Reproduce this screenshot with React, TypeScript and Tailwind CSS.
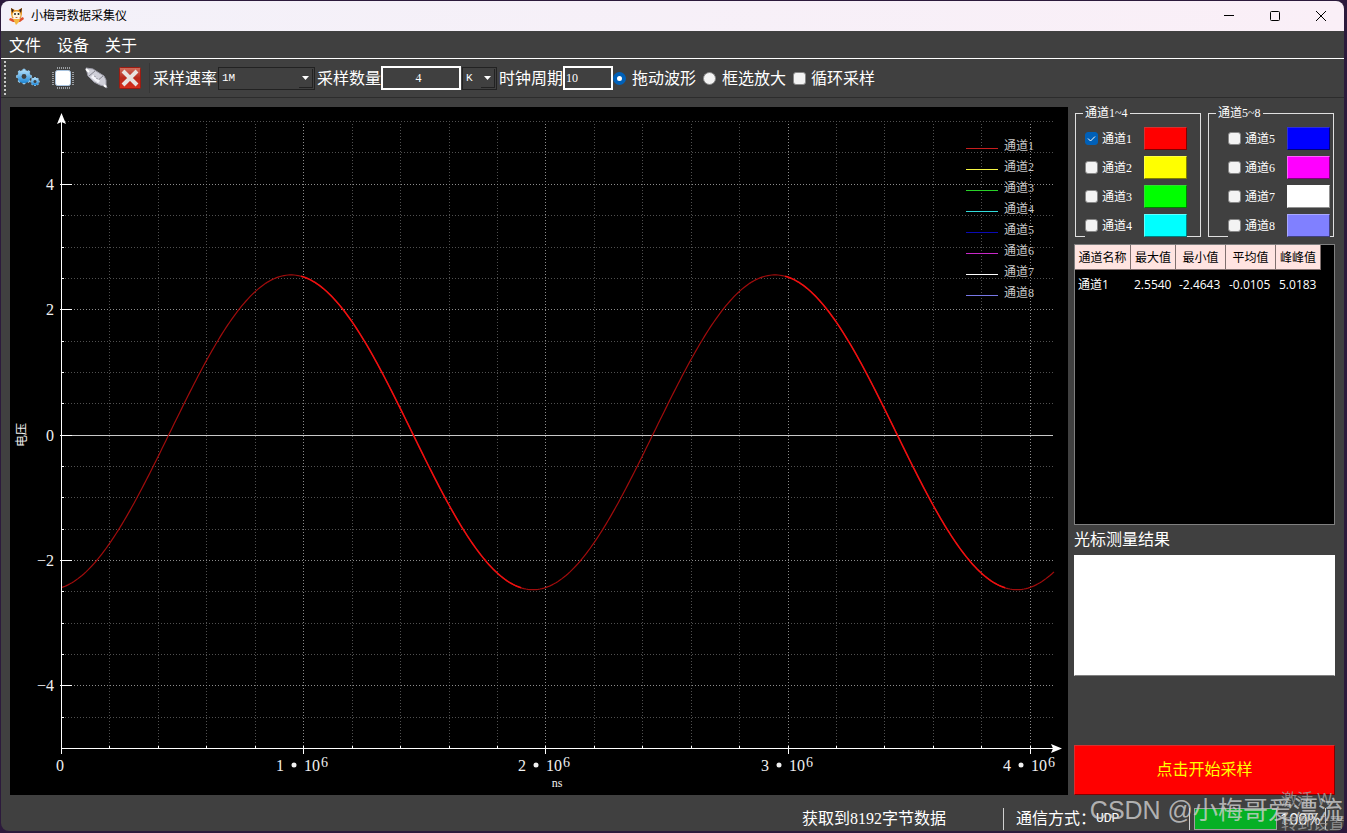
import { useState } from "react";

type Channel = { id: number; name: string; swatch: string; line: string };

const CHANNELS: Channel[] = [
  { id: 1, name: "通道1", swatch: "bg-[#ff0000] border-t-[#d83030] border-l-[#d83030] border-b-[#800000] border-r-[#800000]", line: "#c81e1e" },
  { id: 2, name: "通道2", swatch: "bg-[#ffff00] border-t-[#ffff40] border-l-[#ffff40] border-b-[#808000] border-r-[#808000]", line: "#f5f546" },
  { id: 3, name: "通道3", swatch: "bg-[#00ff00] border-t-[#30e030] border-l-[#30e030] border-b-[#008000] border-r-[#008000]", line: "#28d228" },
  { id: 4, name: "通道4", swatch: "bg-[#00ffff] border-t-[#60ffff] border-l-[#60ffff] border-b-[#008080] border-r-[#008080]", line: "#32dcdc" },
  { id: 5, name: "通道5", swatch: "bg-[#0000ff] border-t-[#3030d8] border-l-[#3030d8] border-b-[#000080] border-r-[#000080]", line: "#0a0ab4" },
  { id: 6, name: "通道6", swatch: "bg-[#ff00ff] border-t-[#ff60ff] border-l-[#ff60ff] border-b-[#800080] border-r-[#800080]", line: "#c828c8" },
  { id: 7, name: "通道7", swatch: "bg-white border-t-white border-l-white border-b-[#909090] border-r-[#909090]", line: "#ffffff" },
  { id: 8, name: "通道8", swatch: "bg-[#8080ff] border-t-[#a8a8ff] border-l-[#a8a8ff] border-b-[#404080] border-r-[#404080]", line: "#7878e6" },
];

const STATS = [
  { title: "通道名称", width: "w-[56px]", value: "通道1" },
  { title: "最大值", width: "w-[45px]", value: "2.5540" },
  { title: "最小值", width: "w-[50px]", value: "-2.4643" },
  { title: "平均值", width: "w-[50px]", value: "-0.0105" },
  { title: "峰峰值", width: "w-[45px]", value: "5.0183" },
];

// plot geometry, in chart units
const LEFT = 51.5;
const RIGHT = 1043;
const TOP = 14.5;
const BOTTOM = 641.5;
const PER_MEGA = 242.2;
const PER_VOLT = 62.7;
const ZERO = 328.1;

const snap = (v: number) => Math.floor(v) + 0.5;
const xAt = (mega: number) => snap(LEFT + mega * PER_MEGA);
const yAt = (volt: number) => snap(ZERO - volt * PER_VOLT);

function wavePath(from: number, to: number) {
  const points: string[] = [];
  for (let x = from; x <= to; x += 2) {
    const v = 0.045 + 2.51 * Math.cos((2 * Math.PI * (x - 281)) / 484);
    points.push(`${x},${(ZERO - v * PER_VOLT).toFixed(2)}`);
  }
  return "M" + points.join("L");
}

export default function App() {
  return (
    <div className="flex min-h-screen flex-col bg-[#2c1a3c] pt-px pr-[3px] pb-[2px] pl-px font-['Liberation_Serif','Noto_Sans_CJK_SC',serif] text-white">
      <div className="relative flex flex-1 flex-col overflow-hidden rounded-lg bg-[#404040]">
        <TitleBar />
        <nav className="flex h-[27px] items-center gap-4 px-2 pt-[2px] text-base leading-6">
          <button>文件</button>
          <button>设备</button>
          <button>关于</button>
        </nav>
        <Toolbar />
        <main className="flex flex-1 gap-[6px] pt-[9px] pr-[9px] pl-[9px]">
          <Chart />
          <Sidebar />
        </main>
        <StatusBar />
        <Watermark />
      </div>
    </div>
  );
}

function TitleBar() {
  return (
    <header className="flex h-[30px] items-center justify-between bg-linear-to-r from-[#f3f1f9] to-[#faeff7] text-black">
      <div className="flex items-center gap-[6px] pl-[7px]">
        <svg width="17" height="18" viewBox="0 0 17 18">
          <path d="M3 1l4 2h3l4-2v6l-1 4H4L3 7z" fill="#e99a2c" />
          <path d="M3 1l3 2-2 3zM14 1l-3 2 2 3z" fill="#3a2318" />
          <ellipse cx="8.500" cy="8" rx="4" ry="3.500" fill="#fff6dd" />
          <circle cx="7" cy="7" r="1" fill="#222" />
          <circle cx="10.500" cy="7" r="1" fill="#222" />
          <path d="M7 10h3l-1.500 1z" fill="#b23a22" />
          <path d="M2 11l4 1h5l4-2 1 2-4 3H5l-4-2z" fill="#df502c" />
          <path d="M5 12h7l-1 3-3 3-1-2z" fill="#f4b942" />
        </svg>
        <h1 className="text-xs leading-4 font-['Open_Sans','Noto_Sans_CJK_SC',sans-serif]">小梅哥数据采集仪</h1>
      </div>
      <div className="flex">
        <button aria-label="最小化" className="flex h-[30px] w-[46px] items-center justify-center">
          <svg width="10" height="10" viewBox="0 0 10 10" stroke="#000"><path d="M0 4.500h10" /></svg>
        </button>
        <button aria-label="最大化" className="flex h-[30px] w-[46px] items-center justify-center">
          <svg width="10" height="10" viewBox="0 0 10 10" fill="none" stroke="#000"><rect x=".5" y=".5" width="9" height="9" rx="1" /></svg>
        </button>
        <button aria-label="关闭" className="flex h-[30px] w-[46px] items-center justify-center">
          <svg width="10" height="10" viewBox="0 0 10 10" stroke="#000"><path d="M0 0l10 10M10 0L0 10" /></svg>
        </button>
      </div>
    </header>
  );
}

function GearsIcon() {
  const teeth = [0, 45, 90, 135, 180, 225, 270, 315];
  return (
    <svg width="24" height="20" viewBox="0 0 24 20">
      <defs>
        <linearGradient id="gear" x1="0" y1="0" x2="0" y2="1">
          <stop offset="0" stopColor="#b4e0fa" />
          <stop offset="1" stopColor="#1c86d6" />
        </linearGradient>
      </defs>
      <g fill="url(#gear)">
        {teeth.map((a) => (
          <rect key={a} x="6.500" y=".7" width="3" height="3" rx=".8" transform={`rotate(${a} 8 8.500)`} />
        ))}
        <circle cx="8" cy="8.500" r="6.600" />
        {teeth.map((a) => (
          <rect key={a} x="18" y="8.900" width="2" height="2" rx=".6" transform={`rotate(${a} 19 13.500)`} />
        ))}
        <circle cx="19" cy="13.500" r="3.800" />
      </g>
      <circle cx="8" cy="8.500" r="2.400" fill="#404040" />
      <circle cx="19" cy="13.500" r="1.500" fill="#404040" />
    </svg>
  );
}

function ChipIcon() {
  return (
    <svg width="22" height="22" viewBox="0 0 22 22">
      <path d="M5 1h13M5 21h13" stroke="#9a9ea2" strokeWidth="2" strokeDasharray="1 1" />
      <path d="M1 5v13M21 5v13" stroke="#9a9ea2" strokeWidth="2" strokeDasharray="1 1" />
      <rect x="3.500" y="3.500" width="15" height="15" rx="2" fill="#fff" stroke="#a9c4e0" />
    </svg>
  );
}

function ConnectorIcon() {
  return (
    <svg width="24" height="22" viewBox="0 0 24 22">
      <path d="M2 1l7 1 3 2 8 5 2 4v5l1 3-3-2-4-1-6-3-6-6-1-4z" fill="#cfcfd8" stroke="#9d9da8" />
      <path d="M2 2l3 3M20 18l2 2" stroke="#fff" strokeWidth="2" />
      <path d="M5 9l6-5M12 15l7-6" stroke="#85858f" />
      <path d="M8 9l7 6" stroke="#f5f5fa" strokeWidth="3" />
      <path d="M10 9l2 1M12 11l2 1" stroke="#9d9da8" />
    </svg>
  );
}

function CloseIcon() {
  return (
    <svg width="22" height="22" viewBox="0 0 22 22">
      <defs>
        <linearGradient id="close" x1="0" y1="0" x2="0" y2="1">
          <stop offset="0" stopColor="#d0705f" />
          <stop offset=".5" stopColor="#b82a1c" />
          <stop offset="1" stopColor="#d8301c" />
        </linearGradient>
      </defs>
      <rect x=".5" y=".5" width="21" height="21" rx="1" fill="url(#close)" stroke="#9c1c12" />
      <path d="M4 4l14 14M18 4L4 18" stroke="#e8e4e0" strokeWidth="4" />
    </svg>
  );
}

function Combo({ label, value, width }: { label: string; value: string; width: string }) {
  return (
    <div className={`relative h-[23px] border border-[#222] ${width}`}>
      <select
        id={label}
        aria-label={label}
        defaultValue={value}
        className="block h-full w-full appearance-none bg-transparent pl-[3px] font-['Liberation_Mono',monospace] text-[11px] leading-4"
      >
        <option>{value}</option>
      </select>
      <span className="pointer-events-none absolute inset-y-px right-px flex w-[14px] items-center justify-center border-r border-b border-[#222]">
        <svg width="7" height="4" viewBox="0 0 7 4"><path d="M0 0h7L3.500 4z" fill="#fff" /></svg>
      </span>
    </div>
  );
}

const RADIO = "size-[13px] appearance-none rounded-full border border-[#888] bg-[#f3f3f3] checked:border-[4px] checked:border-[#0060b8] checked:bg-white";
const CHECK = "size-[13px] appearance-none rounded-[3px] border border-[#888] bg-[#f3f3f3]";

function Toolbar() {
  const [mode, setMode] = useState("drag");
  return (
    <section className="flex h-[40px] items-center border-t border-b border-t-white border-b-[#2c2c2c] pl-[3px] text-base leading-6">
      <span className="h-[34px] w-0 border-l-2 border-dotted border-[#c8c8c8]" />
      <button aria-label="设置" className="ml-[10px]"><GearsIcon /></button>
      <button aria-label="芯片" className="ml-[12px]"><ChipIcon /></button>
      <button aria-label="连接" className="ml-[10px]"><ConnectorIcon /></button>
      <button aria-label="断开" className="ml-[11px]"><CloseIcon /></button>
      <span className="ml-[8px] h-[30px] border-l border-[#363636]" />
      <label htmlFor="采样速率" className="ml-[3px] mr-px shrink-0 pt-[2px]">采样速率</label>
      <Combo label="采样速率" value="1M" width="w-[97px]" />
      <label htmlFor="count" className="ml-[2px] shrink-0 pt-[2px]">采样数量</label>
      <input id="count" defaultValue="4" className="h-[24px] w-[80px] border-2 border-white pr-[5px] text-center text-xs leading-4" />
      <Combo label="单位" value="K" width="ml-px w-[35px]" />
      <label htmlFor="period" className="ml-[2px] shrink-0 pt-[2px]">时钟周期</label>
      <input id="period" defaultValue="10" className="h-[24px] w-[50px] border-2 border-white pl-px text-xs leading-4" />
      <label className="flex shrink-0 items-center gap-[6px]">
        <input type="radio" name="mode" checked={mode === "drag"} onChange={() => setMode("drag")} className={RADIO} />
        <span className="pt-[2px]">拖动波形</span>
      </label>
      <label className="ml-[7px] flex shrink-0 items-center gap-[6px]">
        <input type="radio" name="mode" checked={mode === "zoom"} onChange={() => setMode("zoom")} className={RADIO} />
        <span className="pt-[2px]">框选放大</span>
      </label>
      <label className="ml-[7px] flex shrink-0 items-center gap-[5px]">
        <input type="checkbox" className={CHECK} />
        <span className="pt-[2px]">循环采样</span>
      </label>
    </section>
  );
}

function Chart() {
  const subX = Array.from({ length: 20 }, (_, i) => i + 1);
  const subY = Array.from({ length: 20 }, (_, i) => i - 9);
  return (
    <div className="min-w-0 flex-1 bg-black">
      <svg className="h-full w-full" viewBox="0 0 1058 688" fill="none">
        <g shapeRendering="crispEdges" strokeDasharray="1 2">
          {subX.map((i) => (
            <path key={i} d={`M${xAt(i / 5)} ${BOTTOM}V${TOP}`} stroke={i % 5 === 0 ? "#8c8c8c" : "#505050"} />
          ))}
          {subY.filter((i) => i !== 0).map((i) => (
            <path key={i} d={`M${LEFT} ${yAt(i / 2)}H${RIGHT}`} stroke={i % 4 === 0 ? "#8c8c8c" : "#505050"} />
          ))}
        </g>
        <path d={`M${LEFT} ${yAt(0)}H${RIGHT}`} stroke="#c8c8c8" shapeRendering="crispEdges" />

        <path d={wavePath(52, 1044)} stroke="#a00c0c" strokeWidth="1.200" />
        <path d={wavePath(291, 511)} stroke="#ee1010" strokeWidth="1.500" />
        <path d={wavePath(775, 995)} stroke="#ee1010" strokeWidth="1.500" />

        <g stroke="#fff" shapeRendering="crispEdges">
          <path d={`M${LEFT} 12V${BOTTOM}M${LEFT} ${BOTTOM}H1046`} />
          {subX.map((i) => (
            <path key={i} d={i % 5 === 0 ? `M${xAt(i / 5)} 639v8` : `M${xAt(i / 5)} 639v3`} />
          ))}
          <path d={`M${LEFT} ${BOTTOM}v5`} />
          {subY.map((i) => (
            <path key={i} d={i % 4 === 0 ? `M50 ${yAt(i / 2)}h12` : `M51 ${yAt(i / 2)}h3`} />
          ))}
        </g>
        <path d="M51.500 6l4.500 11-4.500-2-4.500 2zM1052 641.500l-11-4.500 2 4.500-2 4.500z" fill="#fff" />

        <g fill="#f0f0f0" fontSize="16">
          {[4, 2, 0, -2, -4].map((v) => (
            <text key={v} x="44" y={yAt(v) + 5} textAnchor="end">{v < 0 ? `−${-v}` : v}</text>
          ))}
          <text x="50" y="664" textAnchor="middle">0</text>
          {[1, 2, 3, 4].map((n) => {
            const x = Math.floor(xAt(n));
            return (
              <g key={n}>
                <text x={x - 27} y="664">{n}</text>
                <circle cx={x - 9} cy="658" r="2.500" />
                <text x={x + 1} y="664">10</text>
                <text x={x + 18} y="660" fontSize="14">6</text>
              </g>
            );
          })}
          <text x="547" y="680" fontSize="12" textAnchor="middle">ns</text>
          <text x="0" y="0" fontSize="12" textAnchor="middle" transform="translate(16 328) rotate(-90)">电压</text>
        </g>

        {CHANNELS.map((c, i) => (
          <g key={c.id}>
            <path d={`M956 ${41.5 + i * 21}h32`} stroke={c.line} shapeRendering="crispEdges" />
            <text x="994" y={43 + i * 21} fontSize="12" fill="#c8c8c8">{c.name}</text>
          </g>
        ))}
      </svg>
    </div>
  );
}

function ChannelGroup({ title, items, indent }: { title: string; items: Channel[]; indent: string }) {
  return (
    <fieldset className="h-[132px] w-[126px] border border-[#e0e0e0] text-xs leading-4">
      <legend className="ml-[7px] px-[2px]">{title}</legend>
      {/* the last row sits on the frame's bottom edge */}
      <div className={`flex w-[102px] flex-col gap-[6px] bg-[#404040] pt-[6px] ${indent}`}>
        {items.map((c) => (
          <div key={c.id} className="flex h-[23px] items-center justify-between">
            <label className="flex items-center gap-[4px]">
              <span className="relative flex">
                <input type="checkbox" defaultChecked={c.id === 1} className={`peer checked:border-[#0060b8] checked:bg-[#0060b8] ${CHECK}`} />
                <svg className="pointer-events-none absolute inset-0 hidden peer-checked:block" width="13" height="13" viewBox="0 0 13 13" fill="none">
                  <path d="M3 6.500l2.500 2.500L10 4.500" stroke="#fff" />
                </svg>
              </span>
              {c.name}
            </label>
            <button aria-label={`${c.name}颜色`} className={`h-[23px] w-[43px] border ${c.swatch}`} />
          </div>
        ))}
      </div>
    </fieldset>
  );
}

function Sidebar() {
  return (
    <aside className="flex w-[261px] shrink-0 flex-col">
      <div className="-mt-[2px] flex justify-between px-px">
        <ChannelGroup title="通道1~4" items={CHANNELS.slice(0, 4)} indent="ml-[9px]" />
        <ChannelGroup title="通道5~8" items={CHANNELS.slice(4)} indent="ml-[19px]" />
      </div>

      <div className="mt-[7px] h-[281px] border border-[#808080] bg-black">
        <table className="table-fixed border-separate border-spacing-0 text-xs leading-4 font-['Open_Sans','Noto_Sans_CJK_SC',sans-serif]">
          <thead>
            <tr className="h-[25px] bg-[#ffe4e1] text-black">
              {STATS.map((s) => (
                <th key={s.title} className={`border-r border-b border-[#80706e] p-0 pt-px font-normal whitespace-nowrap ${s.width}`}>{s.title}</th>
              ))}
            </tr>
          </thead>
          <tbody>
            <tr className="h-[30px]">
              {STATS.map((s) => (
                <td key={s.title} className="p-0 pl-[3px] whitespace-nowrap">{s.value}</td>
              ))}
            </tr>
          </tbody>
        </table>
      </div>

      <label htmlFor="cursor" className="py-[3px] text-base leading-6">光标测量结果</label>
      <textarea id="cursor" className="h-[121px] resize-none border border-[#808080] border-t-white border-r-white border-l-white bg-white text-black" />
      <button className="mt-auto h-[50px] border border-t-[#d83030] border-r-[#800000] border-b-[#800000] border-l-[#d83030] bg-[#ff0000] text-base leading-6 text-[#ffff00]">
        点击开始采样
      </button>
    </aside>
  );
}

function StatusBar() {
  return (
    <footer className="flex h-[36px] items-center justify-end pt-[11px] pr-[18px] text-base leading-6">
      <span>获取到8192字节数据</span>
      <span className="ml-[57px] h-[22px] border-l border-[#d0d0d0]" />
      <span className="ml-[12px] flex w-[173px] items-center">
        通信方式：<span className="font-['Liberation_Mono',monospace] text-[13px]">UDP</span>
      </span>
      <span className="h-[22px] border-l border-[#d0d0d0]" />
      <div role="progressbar" aria-valuenow={100} className="ml-[4px] flex w-[131px] items-center gap-[3px]">
        <span className="h-[22px] w-[83px] border border-[#a0a0a0] bg-[#06b025]" />
        <span className="font-['Open_Sans',sans-serif]">100%</span>
      </div>
      <span className="h-[22px] border-l border-[#d0d0d0]" />
    </footer>
  );
}

// overlays that float above the window contents
function Watermark() {
  return (
    <>
      <div className="pointer-events-none absolute right-0 bottom-[-4px] w-[63px] text-base leading-6 whitespace-nowrap text-[#a0a0a0]/80 font-['Open_Sans','Noto_Sans_CJK_SC',sans-serif]">
        <p>激活 W</p>
        <p>转到设置</p>
      </div>
      <p className="pointer-events-none absolute right-px bottom-[5px] text-[25px] leading-8 whitespace-nowrap text-[#d0d0d0]/80 font-['Liberation_Sans','Noto_Sans_CJK_SC',sans-serif]">
        CSDN @小梅哥爱漂流
      </p>
    </>
  );
}
